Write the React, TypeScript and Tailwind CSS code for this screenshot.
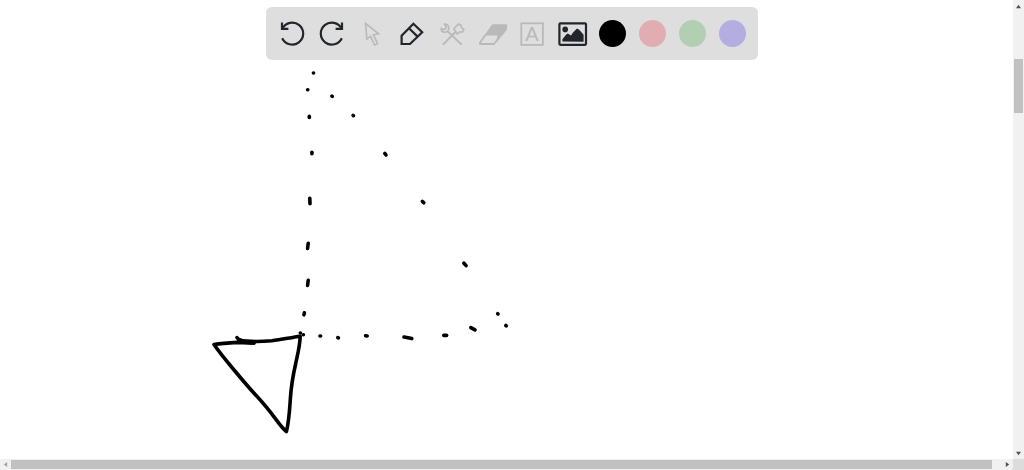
import { useState, type ReactNode } from 'react';
import clsx from 'clsx';

type Tool = { name: string; muted?: boolean; icon: ReactNode };

const TOOLS: Tool[] = [
  {
    name: 'Undo',
    icon: (
      <>
        <path d="M10 8.600v6.200h6.400" />
        <path d="M10.400 14.600A11 11 0 1 1 10.200 24.200" />
      </>
    ),
  },
  {
    name: 'Redo',
    icon: (
      <>
        <path d="M30 8.600v6.200h-6.400" />
        <path d="M29.600 14.600A11 11 0 1 0 29.800 24.200" />
      </>
    ),
  },
  {
    name: 'Select',
    muted: true,
    icon: <path strokeWidth="1.6" d="M13.6 9.4 26.6 19.800l-5.200 1 4.200 8.800-3 1.400-4.200-8.800-3.600 3Z" />,
  },
  {
    name: 'Pen',
    icon: <path d="M9.6 30v-8.2L21.4 9.8l8.800 8.400L18 30ZM17 14.2l8.600 8.400" />,
  },
  {
    name: 'Tools',
    muted: true,
    icon: (
      <>
        <path
          strokeWidth="1.600"
          d="M12.400 10.200c2.600-.400 4.600 1.600 4.400 4-.2 2.400-2 4-4.200 4s-3.600-1.600-3.400-3.800l2.400 1.200 2-.8.6-2.200Z"
        />
        <path strokeWidth="2" d="M16 17.600 29.600 30.600M23.400 18 11 30.600" />
        <path
          strokeWidth="1.600"
          d="m21.800 14.800 4.600-4.800 2.400 1 1 3 2 1.400-1.200 2.800-2.600-.4-2.600 2.200Z"
        />
      </>
    ),
  },
  {
    name: 'Eraser',
    muted: true,
    icon: (
      <>
        <path strokeWidth="1.8" strokeLinejoin="round" d="M13.400 21 8 28.800v1.200h14l12-14.600v-4.200" />
        <path strokeWidth="1" fill="currentColor" d="M20.400 10.800h14.200v4.200L25 26.600l1-5.600H13.200Z" />
      </>
    ),
  },
  {
    name: 'Text',
    muted: true,
    icon: (
      <>
        <rect x="9.300" y="9.300" width="21.600" height="21.600" strokeWidth="1.800" />
        <text x="20" y="27" textAnchor="middle" fill="currentColor" stroke="none" className="text-[20px]">
          A
        </text>
      </>
    ),
  },
  {
    name: 'Image',
    icon: (
      <>
        <rect x="7.400" y="9.400" width="26.600" height="21.400" rx="1" />
        <circle cx="13.200" cy="15.400" r="2.800" fill="currentColor" stroke="none" />
        <path
          stroke="none"
          fill="currentColor"
          d="M10.400 27.600v-2.400l3.800-4.800 1.600-.8 3.200 2 2-3.200 4-3.800 2.200 1.200 4.400 5v7Z"
        />
      </>
    ),
  },
];

const COLORS = [
  { name: 'Black', swatch: 'bg-black' },
  { name: 'Red', swatch: 'bg-[#e1adb3]' },
  { name: 'Green', swatch: 'bg-[#b3cfb1]' },
  { name: 'Purple', swatch: 'bg-[#b3ade1]' },
];

// freehand dashes, one stroke each
const DASHES = [
  'M313.4 73h.2',
  'M307.6 89.7h.2',
  'M331.9 96.1l.4.3',
  'M353.1 115.4l.4.3',
  'M309.3 116.4v1',
  'M311.9 152.2v1.6',
  'M384.8 153.4l1.2 1.6',
  'M309.8 198.4l.2 5.4',
  'M422.4 201.4l1.4 1.4',
  'M308.2 243.4l-.6 5',
  'M308.2 280.4l-.6 5',
  'M463.9 263.2l2.2 2.4',
  'M304.4 312.8l-.5 2',
  'M497.7 313.7l.3.2',
  'M505.8 325.5l.5.4',
  'M300.3 333h.1',
  'M303.3 334.8h.1',
  'M320 336h.6',
  'M337.8 337.6l.6.3',
  'M365.6 335.7l1.6.3',
  'M404 337l7.8 1.6',
  'M443.8 335.4h2.8',
  'M470.8 327.6l4.2 2.2',
];

function Toolbar() {
  const [color, setColor] = useState('Black');

  return (
    <div
      role="toolbar"
      aria-label="Drawing tools"
      className="absolute top-[7px] left-1/2 -translate-x-1/2 flex items-center h-[53px] px-1.5 rounded-md bg-[#dedede]"
    >
      {TOOLS.map((tool) => (
        <button
          key={tool.name}
          type="button"
          aria-label={tool.name}
          className={clsx('size-10', tool.muted ? 'text-[#b9b9b9]' : 'text-[#222529]')}
        >
          <svg viewBox="0 0 40 40" className="size-10" fill="none" stroke="currentColor" strokeWidth="2.2">
            {tool.icon}
          </svg>
        </button>
      ))}
      {COLORS.map((c) => (
        <label key={c.name} className="size-10 flex items-center justify-center">
          <input
            type="radio"
            name="color"
            aria-label={c.name}
            checked={color === c.name}
            onChange={() => setColor(c.name)}
            className={clsx('appearance-none size-[27px] rounded-full', c.swatch)}
          />
        </label>
      ))}
    </div>
  );
}

function Arrow({ label, points, className }: { label: string; points: string; className: string }) {
  return (
    <button type="button" aria-label={label} className={clsx('flex items-center justify-center shrink-0', className)}>
      <svg viewBox="0 0 6 6" className="size-[5px]" fill="currentColor">
        <polygon points={points} />
      </svg>
    </button>
  );
}

export default function App() {
  return (
    <div className="relative grid grid-cols-[1fr_11px] grid-rows-[1fr_11px] h-screen overflow-hidden bg-white font-['Liberation_Sans',sans-serif]">
      <main className="min-w-0 min-h-0 overflow-hidden">
        <svg
          role="img"
          aria-label="Drawing"
          className="block w-full h-full"
          fill="none"
          stroke="black"
          strokeWidth="3.6"
          strokeLinecap="round"
          strokeLinejoin="round"
        >
          <path d="M237 337.6c1.4 2.2 5 3.2 9.4 3.4 8.6.8 17.6.4 25.4-.2 10-1.4 19-3.2 28.4-4.6-.2 9.6-2.6 18-4.6 27.8-2.6 11.4-4.4 22.4-5.2 34.2-.8 11-1.2 22.4-4 33.400-4.400-3.600-7.600-8.400-12-14.200-5.600-7.800-12.200-15.400-19.400-23.200-8-8.600-15.600-17.800-22.600-26.200-6.800-8-13-15.600-18.400-23.400 7.600-1.400 15-1.800 23.400-2.200l16.600.8" />
          <path d="M240 340.2c3.600 2 8.600 2.400 14 2.400" />
          {DASHES.map((d) => (
            <path key={d} d={d} />
          ))}
        </svg>
      </main>

      {/* Vertical scrollbar */}
      <div className="flex flex-col min-h-0 bg-[#f1f1f1]">
        <Arrow label="Scroll up" points="3,1 6,5 0,5" className="h-3 text-[#505050]" />
        <div className="flex-1 min-h-0 px-px">
          <div className="h-[10.8%]" />
          <div className="h-[12.4%] bg-[#c1c1c1]" />
        </div>
        <Arrow label="Scroll down" points="0,1 6,1 3,5" className="h-3 text-[#505050]" />
      </div>

      {/* Horizontal scrollbar */}
      <div className="flex min-w-0 bg-[#f1f1f1]">
        <Arrow label="Scroll left" points="5,0 5,6 1,3" className="w-[11px] text-[#a3a3a3]" />
        <div className="flex-1 min-w-0 py-px">
          <div className="w-[99%] h-full bg-[#c1c1c1]" />
        </div>
        <Arrow label="Scroll right" points="1,0 5,3 1,6" className="w-[11px] text-[#505050]" />
      </div>
      <div className="bg-[#dcdcdc]" />

      <Toolbar />
    </div>
  );
}
